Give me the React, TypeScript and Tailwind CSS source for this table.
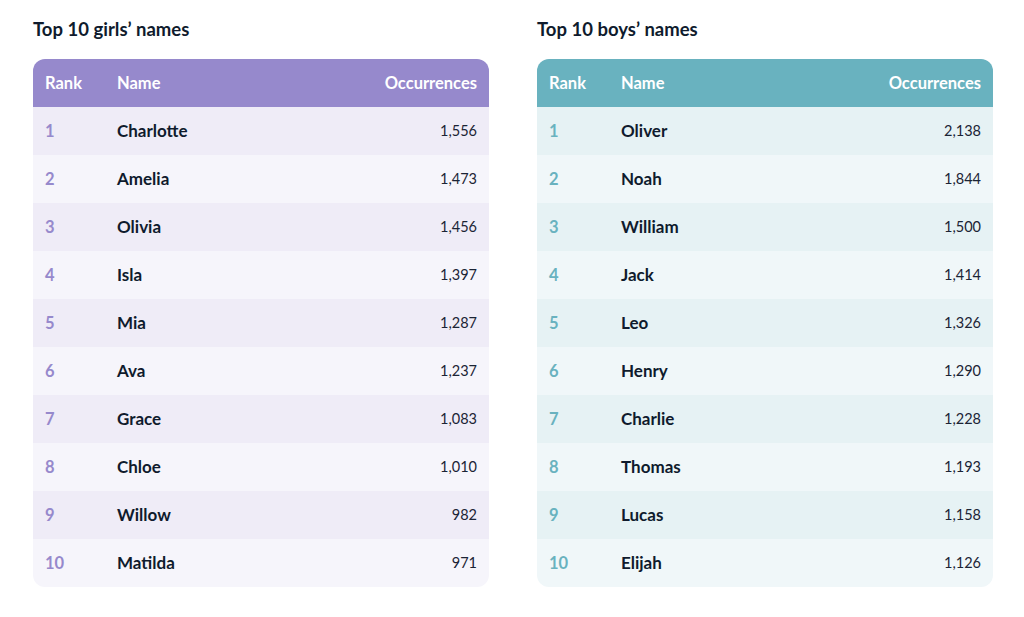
import React from 'react';

type Row = { rank: number; name: string; count: string };

const girls: Row[] = [
  { rank: 1, name: 'Charlotte', count: '1,556' },
  { rank: 2, name: 'Amelia', count: '1,473' },
  { rank: 3, name: 'Olivia', count: '1,456' },
  { rank: 4, name: 'Isla', count: '1,397' },
  { rank: 5, name: 'Mia', count: '1,287' },
  { rank: 6, name: 'Ava', count: '1,237' },
  { rank: 7, name: 'Grace', count: '1,083' },
  { rank: 8, name: 'Chloe', count: '1,010' },
  { rank: 9, name: 'Willow', count: '982' },
  { rank: 10, name: 'Matilda', count: '971' },
];

const boys: Row[] = [
  { rank: 1, name: 'Oliver', count: '2,138' },
  { rank: 2, name: 'Noah', count: '1,844' },
  { rank: 3, name: 'William', count: '1,500' },
  { rank: 4, name: 'Jack', count: '1,414' },
  { rank: 5, name: 'Leo', count: '1,326' },
  { rank: 6, name: 'Henry', count: '1,290' },
  { rank: 7, name: 'Charlie', count: '1,228' },
  { rank: 8, name: 'Thomas', count: '1,193' },
  { rank: 9, name: 'Lucas', count: '1,158' },
  { rank: 10, name: 'Elijah', count: '1,126' },
];

const themes = {
  girls: {
    head: 'bg-[#9689cc]',
    rank: 'text-[#9689cc]',
    odd: 'bg-[#efecf7]',
    even: 'bg-[#f6f5fb]',
  },
  boys: {
    head: 'bg-[#69b2bf]',
    rank: 'text-[#69b2bf]',
    odd: 'bg-[#e6f2f4]',
    even: 'bg-[#f0f7f9]',
  },
};

const NamesTable: React.FC<{ title: string; rows: Row[]; theme: keyof typeof themes }> = ({
  title,
  rows,
  theme,
}) => {
  const t = themes[theme];
  return (
    <section className="flex-1">
      <h2 className="text-[18.5px] font-bold text-[#0f1b2d] leading-6 mt-[17px] mb-[18px]">{title}</h2>
      <div className="rounded-xl overflow-hidden">
        {/* Header */}
        <div className={`${t.head} flex items-center h-12 px-3 text-white font-bold text-[16.5px]`}>
          <span className="w-[72px]">Rank</span>
          <span className="flex-1">Name</span>
          <span>Occurrences</span>
        </div>
        {rows.map((r, i) => (
          <div
            key={r.rank}
            className={`${i % 2 === 0 ? t.odd : t.even} flex items-center h-12 px-3`}
          >
            <span className={`w-[72px] font-bold text-[16.5px] ${t.rank}`}>{r.rank}</span>
            <span className="flex-1 font-bold text-[17px] text-[#0f1b2d]">{r.name}</span>
            <span className="text-[14.5px] text-[#1b2435]">{r.count}</span>
          </div>
        ))}
      </div>
    </section>
  );
};

export default function App() {
  return (
    <div
      className="w-[1024px] h-[617px] bg-white flex gap-12 pl-[33px] pr-[31px]"
      style={{ fontFamily: 'Lato, "Noto Sans", sans-serif' }}
    >
      <NamesTable title="Top 10 girls’ names" rows={girls} theme="girls" />
      <NamesTable title="Top 10 boys’ names" rows={boys} theme="boys" />
    </div>
  );
}
